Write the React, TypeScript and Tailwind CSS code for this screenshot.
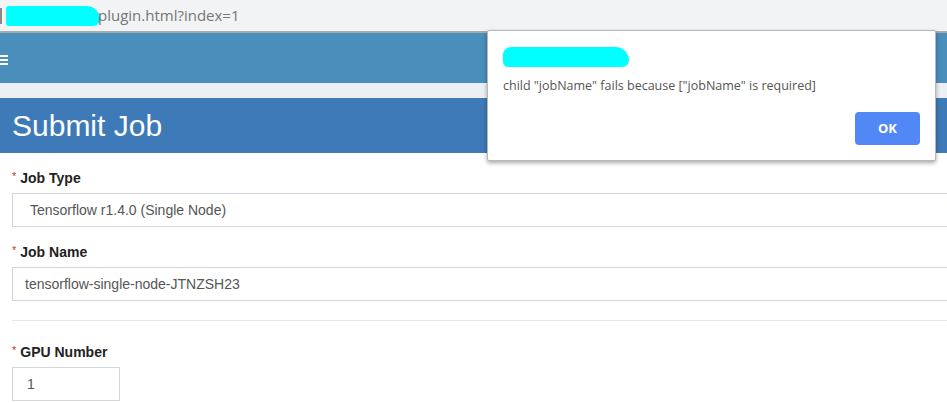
import React from 'react';

const Label = ({ text }: { text: string }) => (
    <p className="flex items-center h-[20px] text-[14px] font-bold text-[#222] mb-[5px]">
        <span className="text-[#c0392b] text-[11px] font-normal mr-[4px] -mt-[4px]">*</span>
        {text}
    </p>
);

const App = () => {
    return (
        <main className="w-[947px] h-[403px] overflow-hidden bg-white relative font-['Liberation_Sans',Arial,sans-serif]">
            {/* browser address bar */}
            <div className="h-[31px] bg-[#f1f3f4] flex items-center border-b-2 border-[#aaaaaa] box-content">
                <div className="w-[2px] h-[16px] bg-[#888] mr-[4px]" />
                <div className="w-[94px] h-[20px] bg-[#00ffff] rounded-[10px_40px_20px_10px]" />
                <span className="text-[15px] text-[#777] font-['Open_Sans',sans-serif] -ml-[2px]">plugin.html?index=1</span>
            </div>

            {/* app nav */}
            <div className="h-[50px] bg-[#4a8ebc] flex items-center">
                <div className="flex flex-col gap-[2px] w-[8px] mt-[4px]">
                    <div className="h-[2px] bg-white" />
                    <div className="h-[2px] bg-white" />
                    <div className="h-[2px] bg-white" />
                </div>
            </div>
            <div className="h-[15px] bg-[#ecf0f5]" />

            {/* title */}
            <div className="h-[55px] bg-[#3e7ab7] flex items-center pl-[12px]">
                <h1 className="text-[30px] text-white leading-none">Submit Job</h1>
            </div>

            {/* form */}
            <div className="pl-[12px] pt-[15px]">
                <Label text="Job Type" />
                <div className="h-[34px] border border-[#d2d6de] flex items-center pl-[17px] text-[14px] text-[#555] w-[950px]">
                    Tensorflow r1.4.0 (Single Node)
                </div>
                <div className="h-[15px]" />
                <Label text="Job Name" />
                <div className="h-[34px] border border-[#d2d6de] flex items-center pl-[12px] text-[14px] text-[#555] w-[950px]">
                    tensorflow-single-node-JTNZSH23
                </div>
                <div className="h-[20px] border-b border-[#e6e6e6]" />
                <div className="h-[21px]" />
                <Label text="GPU Number" />
                <div className="h-[34px] w-[108px] border border-[#d2d6de] flex items-center pl-[14px] text-[14px] text-[#555]">
                    1
                </div>
            </div>

            {/* alert dialog */}
            <div className="absolute left-[487px] top-[30px] w-[449px] h-[131px] bg-white border border-[#b8b8b8] rounded-[2px] shadow-[0_2px_4px_rgba(0,0,0,0.35)] font-['Open_Sans',sans-serif]">
                <div className="ml-[15px] mt-[16px] w-[126px] h-[20px] bg-[#00ffff] rounded-[12px_20px_10px_8px]" />
                <p className="ml-[15px] mt-[10px] text-[12.5px] text-[#555]">
                    child "jobName" fails because ["jobName" is required]
                </p>
                <button className="absolute left-[367px] top-[81px] w-[65px] h-[33px] bg-[#5288f5] rounded-[4px] text-white text-[13px] font-bold">
                    OK
                </button>
            </div>
        </main>
    );
};

export default App;
